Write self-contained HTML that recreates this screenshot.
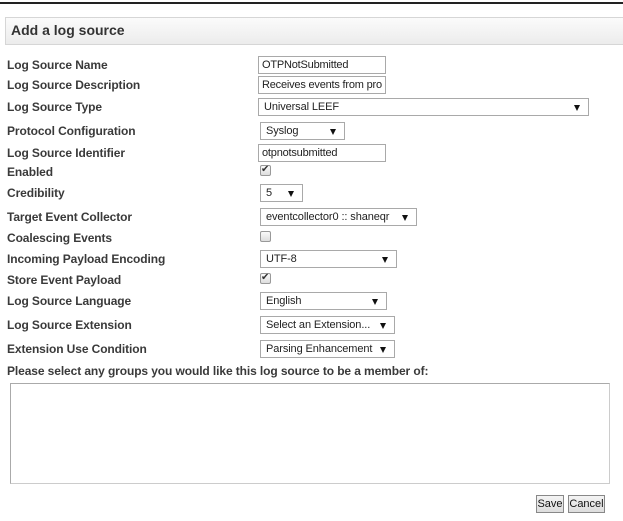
<!DOCTYPE html>
<html><head><meta charset="utf-8"><style>
body{margin:0;width:623px;height:521px;background:#fff;position:relative;overflow:hidden;font-family:"Liberation Sans",Arial,sans-serif;}
.a{position:absolute}
.l{position:absolute;left:7px;font-size:12px;font-weight:bold;color:#3a3a3a;line-height:14px;white-space:nowrap;letter-spacing:-0.1px}
.i{position:absolute;border:1px solid #a9a9a9;background:#fff;font-size:11px;color:#222;line-height:16px;padding-left:3px;box-sizing:border-box;height:18px;white-space:nowrap;overflow:hidden;letter-spacing:-0.2px}
.s{position:absolute;border:1px solid #a9a9a9;background:#fff;font-size:11px;color:#222;line-height:17px;padding-left:5px;box-sizing:border-box;height:18px;white-space:nowrap;letter-spacing:-0.1px}
.s:after{content:"";position:absolute;right:8px;top:6px;border-left:3.5px solid transparent;border-right:3.5px solid transparent;border-top:6px solid #111}
.c{position:absolute;left:260px;width:11px;height:11px;border:1px solid #999;border-radius:2px;background:linear-gradient(#fafafa,#ddd);box-sizing:border-box}
.c.k:after{content:"✔";position:absolute;left:0px;top:-2px;font-size:10px;color:#333}
.b{position:absolute;top:495px;height:18px;border:1px solid #888;background:linear-gradient(#f4f4f4,#ddd);font-size:11px;line-height:16px;text-align:center;box-sizing:border-box;color:#111}
</style></head><body>
<div class="a" style="left:0;top:2px;width:623px;height:2px;background:#222"></div>
<div class="a" style="left:5px;top:17px;width:620px;height:28px;box-sizing:border-box;border:1px solid #d6d6d6;background:linear-gradient(#fbfbfb,#ececec)"></div>
<div class="a" style="left:11px;top:22px;font-size:14px;font-weight:bold;color:#333">Add a log source</div>

<div class="l" style="top:58px">Log Source Name</div>
<div class="l" style="top:78px">Log Source Description</div>
<div class="l" style="top:100px">Log Source Type</div>
<div class="l" style="top:124px">Protocol Configuration</div>
<div class="l" style="top:146px">Log Source Identifier</div>
<div class="l" style="top:165px">Enabled</div>
<div class="l" style="top:186px">Credibility</div>
<div class="l" style="top:210px">Target Event Collector</div>
<div class="l" style="top:231px">Coalescing Events</div>
<div class="l" style="top:252px">Incoming Payload Encoding</div>
<div class="l" style="top:273px">Store Event Payload</div>
<div class="l" style="top:294px">Log Source Language</div>
<div class="l" style="top:318px">Log Source Extension</div>
<div class="l" style="top:342px">Extension Use Condition</div>
<div class="l" style="top:364px">Please select any groups you would like this log source to be a member of:</div>

<div class="i" style="left:258px;top:56px;width:128px">OTPNotSubmitted</div>
<div class="i" style="left:258px;top:76px;width:128px">Receives events from pro</div>
<div class="s" style="left:258px;top:98px;width:331px">Universal LEEF</div>
<div class="s" style="left:260px;top:122px;width:85px">Syslog</div>
<div class="i" style="left:258px;top:144px;width:128px">otpnotsubmitted</div>
<div class="c k" style="top:165px"></div>
<div class="s" style="left:260px;top:184px;width:43px">5</div>
<div class="s" style="left:260px;top:208px;width:157px">eventcollector0 :: shaneqr</div>
<div class="c" style="top:231px"></div>
<div class="s" style="left:260px;top:250px;width:137px">UTF-8</div>
<div class="c k" style="top:273px"></div>
<div class="s" style="left:260px;top:292px;width:127px">English</div>
<div class="s" style="left:260px;top:316px;width:135px">Select an Extension...</div>
<div class="s" style="left:260px;top:340px;width:135px">Parsing Enhancement</div>

<div class="a" style="left:10px;top:383px;width:600px;height:101px;box-sizing:border-box;border:1px solid #aaa;border-right-color:#ccc;border-bottom-color:#ccc"></div>
<div class="b" style="left:536px;width:28px">Save</div>
<div class="b" style="left:568px;width:37px">Cancel</div>
</body></html>
